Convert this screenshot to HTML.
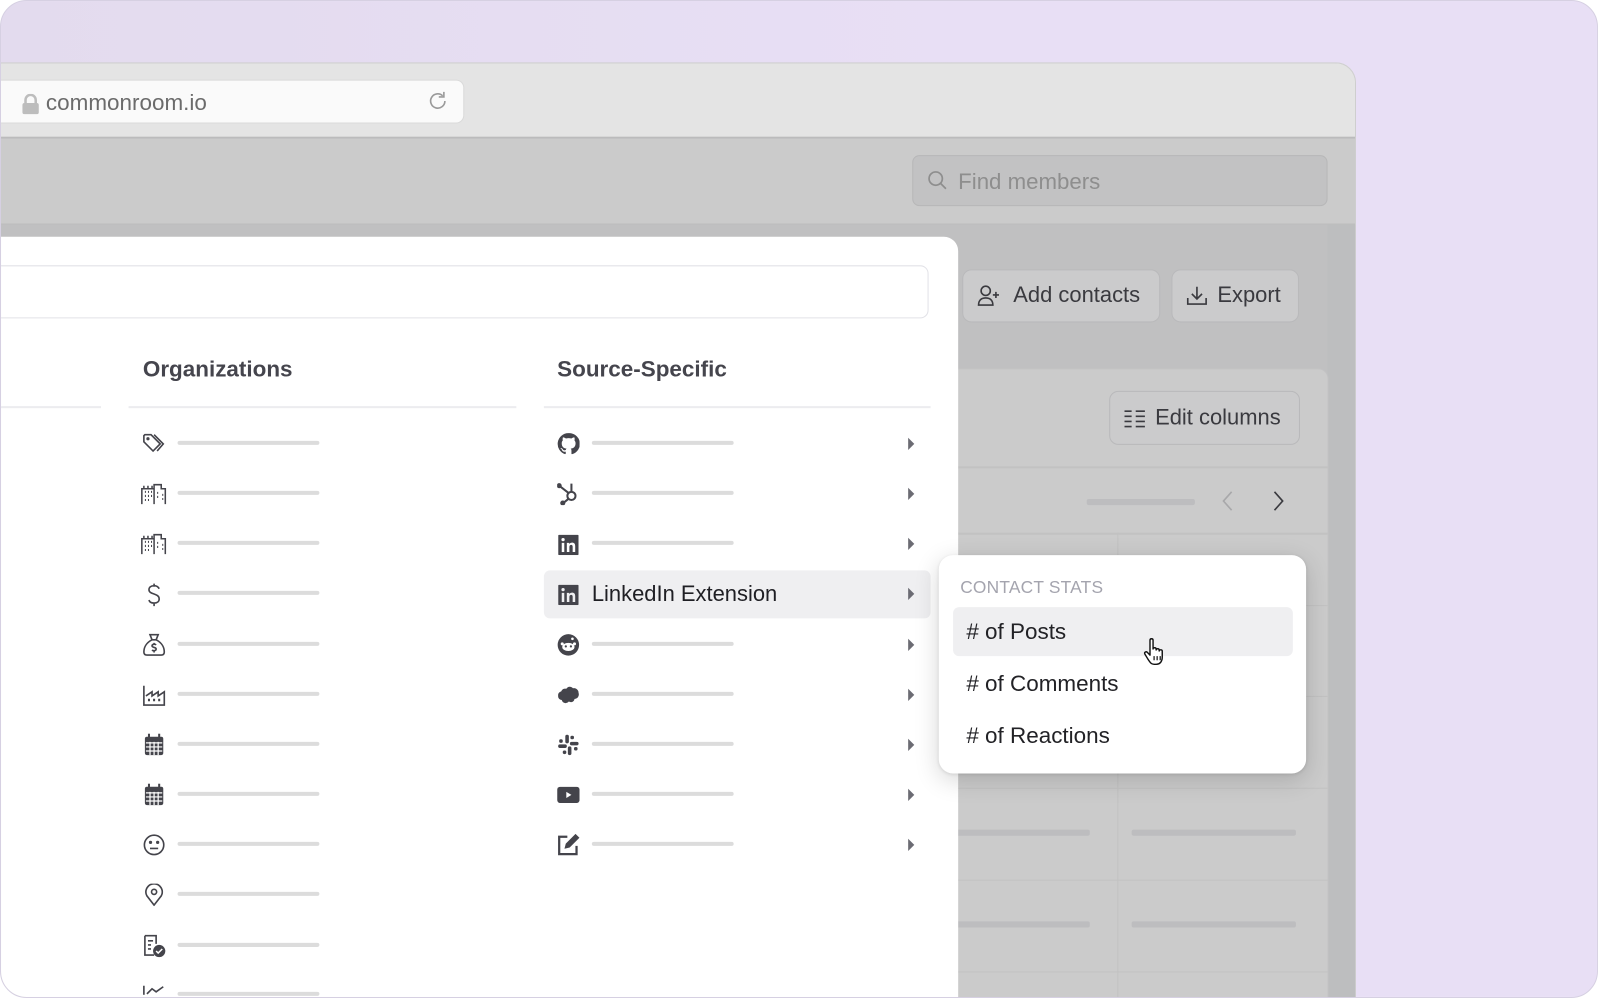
<!DOCTYPE html>
<html><head><meta charset="utf-8"><style>
html,body{margin:0;padding:0;width:1600px;height:1000px;overflow:hidden;background:#fff}
#w{position:absolute;left:0;top:0;width:1568px;height:980px;transform:scale(1.020408);transform-origin:0 0;font-family:"Liberation Sans",sans-serif;overflow:hidden}
.a{position:absolute}
.frame{left:0;top:0;width:1564px;height:976px;border:1.5px solid #d6d0e2;border-radius:26px;background:linear-gradient(90deg,#e3dbee 0%,#e8dff5 60%);overflow:hidden}
.bar{height:4px;background:#dcdcdc;border-radius:2px}
.tri{width:0;height:0;border-left:6px solid #6b6b73;border-top:6px solid transparent;border-bottom:6px solid transparent}
.btn{background:#cbcbcc;border:1.5px solid #b9b9bb;border-radius:9px;box-sizing:border-box;color:#3a3a3f;font-size:20px}
svg{position:absolute}
</style></head><body><div id="w">
<div class="a frame">
 <div class="a" style="left:-12px;top:60px;width:1338px;height:916px;border-radius:0 20px 0 0;background:#c0c0c1;overflow:hidden;border:1px solid #d0d0d0;border-bottom:none">
  <div class="a" style="left:0;top:0;width:1338px;height:72px;background:#e4e4e4;border-bottom:1.5px solid #b4b4b4"></div>
  <div class="a" style="left:0;top:16px;width:463px;height:41px;background:#fafafa;border-radius:8px;border:1px solid #dadada"></div>
  <svg style="left:31px;top:30px" width="18" height="20" viewBox="0 0 18 20"><path d="M4 9V6a5 5 0 0 1 10 0v3" fill="none" stroke="#bdbdbd" stroke-width="2.5"/><rect x="1" y="9" width="16" height="11" rx="2" fill="#bdbdbd"/></svg>
  <div class="a" style="left:55px;top:26px;font-size:22px;color:#6b6b6b">commonroom.io</div>
  <svg style="left:428px;top:26px" width="22" height="22" viewBox="0 0 22 22"><path d="M18 11a7 7 0 1 1-2.2-5.1" fill="none" stroke="#9a9a9a" stroke-width="1.6"/><path d="M17 2v5h-5" fill="none" stroke="#9a9a9a" stroke-width="1.6"/></svg>
  <div class="a" style="left:0;top:74px;width:1338px;height:83px;background:#cbcbcb;border-bottom:1.5px solid #bdbdbd"></div>
  <div class="a" style="left:904px;top:90px;width:407px;height:50px;background:#c2c2c3;border:1.5px solid #b7b7b8;border-radius:7px;box-sizing:border-box"></div>
  <svg style="left:918px;top:104px" width="22" height="22" viewBox="0 0 22 22"><circle cx="9" cy="9" r="6.5" fill="none" stroke="#8e8e8e" stroke-width="1.7"/><path d="M14 14l5 5" stroke="#8e8e8e" stroke-width="1.7"/></svg>
  <div class="a" style="left:949px;top:103px;font-size:21.8px;color:#8e8e8e">Find members</div>
  <div class="a" style="left:1311px;top:158px;width:28px;height:760px;background:#bdbebf"></div>
  <div class="a btn" style="left:953px;top:202px;width:194px;height:52px"></div>
  <svg style="left:967px;top:216px" width="26" height="24" viewBox="0 0 26 24"><circle cx="9" cy="7" r="4.5" fill="none" stroke="#3a3a3f" stroke-width="1.6"/><path d="M2 21c0-5 3-7 7-7s7 2 7 7z" fill="none" stroke="#3a3a3f" stroke-width="1.6"/><path d="M19 8v6M16 11h6" stroke="#3a3a3f" stroke-width="1.6"/></svg>
  <div class="a" style="left:1003px;top:215px;font-size:21.5px;color:#3a3a3f">Add contacts</div>
  <div class="a btn" style="left:1158px;top:202px;width:125px;height:52px"></div>
  <svg style="left:1171px;top:216px" width="24" height="24" viewBox="0 0 24 24"><path d="M12 3v11M7 10l5 5 5-5M3 14v6h18v-6" fill="none" stroke="#3a3a3f" stroke-width="1.6"/></svg>
  <div class="a" style="left:1203px;top:215px;font-size:21.5px;color:#3a3a3f">Export</div>
  <div class="a" style="left:921px;top:299px;width:389px;height:640px;background:#cbcbcb;border:1.5px solid #c2c2c3;border-radius:10px;overflow:hidden">
   <div class="a btn" style="left:175px;top:21px;width:187px;height:53px"></div>
   <svg style="left:189px;top:38px" width="22" height="20" viewBox="0 0 22 20"><path d="M1 3h7M1 8h7M1 13h7M1 18h7M12 3h9M12 8h9M12 13h9M12 18h9" stroke="#3a3a3f" stroke-width="1.6"/></svg>
   <div class="a" style="left:220px;top:35px;font-size:21.5px;color:#3a3a3f">Edit columns</div>
   <div class="a" style="left:0;top:95px;width:389px;height:1.5px;background:#c2c2c2"></div>
   <div class="a" style="left:153px;top:127px;width:106px;height:6px;background:#bdbdbf;border-radius:2px"></div>
   <svg style="left:284px;top:118px" width="14" height="22" viewBox="0 0 14 22"><path d="M11 2L3 11l8 9" fill="none" stroke="#a8a8aa" stroke-width="1.6"/></svg>
   <svg style="left:334px;top:118px" width="14" height="22" viewBox="0 0 14 22"><path d="M3 2l8 9-8 9" fill="none" stroke="#3a3a3f" stroke-width="1.6"/></svg>
   <div class="a" style="left:0;top:160px;width:389px;height:1.5px;background:#c2c2c2"></div>
   <div class="a" style="left:0;top:231px;width:389px;height:1px;background:#c2c2c2"></div>
   <div class="a" style="left:0;top:320px;width:389px;height:1px;background:#c2c2c2"></div>
   <div class="a" style="left:0;top:410px;width:389px;height:1px;background:#c2c2c2"></div>
   <div class="a" style="left:0;top:500px;width:389px;height:1px;background:#c2c2c2"></div>
   <div class="a" style="left:0;top:590px;width:389px;height:1px;background:#c2c2c2"></div>
   <div class="a" style="left:183px;top:160px;width:1px;height:480px;background:#c2c2c2"></div>
   <div class="a" style="left:20px;top:451px;width:136px;height:6px;background:#bdbdbf;border-radius:2px"></div>
   <div class="a" style="left:197px;top:451px;width:161px;height:6px;background:#bdbdbf;border-radius:2px"></div>
   <div class="a" style="left:20px;top:541px;width:136px;height:6px;background:#bdbdbf;border-radius:2px"></div>
   <div class="a" style="left:197px;top:541px;width:161px;height:6px;background:#bdbdbf;border-radius:2px"></div>
  </div>
 </div>
 <div class="a" style="left:-10px;top:231px;width:948px;height:745px;background:#fff;border-radius:0 14px 0 0"></div>
 <div class="a" style="left:-10px;top:259px;width:919px;height:52px;border:1.5px solid #e2e2e7;border-radius:8px;box-sizing:border-box"></div>
 <div class="a" style="left:139px;top:348px;font-size:22px;font-weight:bold;color:#45454d">Organizations</div>
 <div class="a" style="left:545px;top:348px;font-size:22px;font-weight:bold;color:#45454d">Source-Specific</div>
 <div class="a" style="left:0;top:397px;width:98px;height:1.5px;background:#ececef"></div>
 <div class="a" style="left:125px;top:397px;width:380px;height:1.5px;background:#ececef"></div>
 <div class="a" style="left:532px;top:397px;width:379px;height:1.5px;background:#ececef"></div>
 <div class="a bar" style="left:173px;top:431px;width:139px"></div>
 <div class="a bar" style="left:173px;top:480px;width:139px"></div>
 <div class="a bar" style="left:173px;top:529px;width:139px"></div>
 <div class="a bar" style="left:173px;top:578px;width:139px"></div>
 <div class="a bar" style="left:173px;top:628px;width:139px"></div>
 <div class="a bar" style="left:173px;top:677px;width:139px"></div>
 <div class="a bar" style="left:173px;top:726px;width:139px"></div>
 <div class="a bar" style="left:173px;top:775px;width:139px"></div>
 <div class="a bar" style="left:173px;top:824px;width:139px"></div>
 <div class="a bar" style="left:173px;top:873px;width:139px"></div>
 <div class="a bar" style="left:173px;top:923px;width:139px"></div>
 <div class="a bar" style="left:173px;top:971px;width:139px"></div>
 <svg style="left:138px;top:423px" width="24" height="22" viewBox="0 0 24 22" fill="none" stroke="#44444b" stroke-width="1.6"><path d="M2 3v6l9 9 7-7-9-9H3z"/><path d="M12 2l9 9-6 7"/><circle cx="6" cy="6" r="0.8" fill="#44444b"/></svg>
 <svg style="left:137px;top:472px" width="26" height="22" viewBox="0 0 26 22" fill="none" stroke="#44444b" stroke-width="1.5"><path d="M1 21V6h12v15M13 21V2h7v4h4v15"/><path d="M4 9h1M7 9h1M10 9h1M4 13h1M7 13h1M10 13h1M4 17h1M7 17h1M16 10h1M16 14h1M21 12h1M21 16h1" stroke-width="2"/><path d="M3 3v3M7 3v3M11 3v3"/></svg>
 <svg style="left:137px;top:521px" width="26" height="22" viewBox="0 0 26 22" fill="none" stroke="#44444b" stroke-width="1.5"><path d="M1 21V6h12v15M13 21V2h7v4h4v15"/><path d="M4 9h1M7 9h1M10 9h1M4 13h1M7 13h1M10 13h1M4 17h1M7 17h1M16 10h1M16 14h1M21 12h1M21 16h1" stroke-width="2"/><path d="M3 3v3M7 3v3M11 3v3"/></svg>
 <svg style="left:142px;top:570px" width="16" height="24" viewBox="0 0 16 24" fill="none" stroke="#44444b" stroke-width="1.6"><path d="M13 6c-1-2-3-3-5-3-3 0-5 1.5-5 4 0 5 10 3 10 9 0 2.5-2 4-5 4-2.5 0-4.5-1-5-3M8 1v3M8 20v3"/></svg>
 <svg style="left:138px;top:619px" width="24" height="24" viewBox="0 0 24 24" fill="none" stroke="#44444b" stroke-width="1.6"><path d="M8 2h8l-2 5h-4zM10 7C4 10 2 15 2 19c0 2 1 3 3 3h14c2 0 3-1 3-3 0-4-2-9-8-12"/><path d="M14 12c-1-1-4-1-4 1s4 1 4 3-3 2-4 1M12 10v1.5M12 18v1.5"/></svg>
 <svg style="left:138px;top:669px" width="24" height="22" viewBox="0 0 24 22" fill="none" stroke="#44444b" stroke-width="1.6"><path d="M2 2v19h20V8l-6 4V8l-6 4V8l-6 4"/><path d="M6 16h2M11 16h2M16 16h2" stroke-width="2.4"/></svg>
 <svg style="left:140px;top:718px" width="20" height="22" viewBox="0 0 20 22"><rect x="1" y="3" width="18" height="18" rx="2" fill="#44444b"/><path d="M5 0v5M15 0v5" stroke="#44444b" stroke-width="2"/><path d="M2 9h16M2 13h16M2 17h16M6 8v13M10 8v13M14 8v13" stroke="#fff" stroke-width="1.2"/></svg>
 <svg style="left:140px;top:767px" width="20" height="22" viewBox="0 0 20 22"><rect x="1" y="3" width="18" height="18" rx="2" fill="#44444b"/><path d="M5 0v5M15 0v5" stroke="#44444b" stroke-width="2"/><path d="M2 9h16M2 13h16M2 17h16M6 8v13M10 8v13M14 8v13" stroke="#fff" stroke-width="1.2"/></svg>
 <svg style="left:139px;top:816px" width="22" height="22" viewBox="0 0 22 22" fill="none" stroke="#44444b" stroke-width="1.6"><circle cx="11" cy="11" r="9.5"/><path d="M7 14.5h8"/><circle cx="7.5" cy="8.5" r="0.8" fill="#44444b"/><circle cx="14.5" cy="8.5" r="0.8" fill="#44444b"/></svg>
 <svg style="left:141px;top:865px" width="18" height="22" viewBox="0 0 18 22" fill="none" stroke="#44444b" stroke-width="1.6"><path d="M9 21l-7-9a8 8 0 1 1 14 0z"/><circle cx="9" cy="8" r="2.5"/></svg>
 <svg style="left:138px;top:914px" width="24" height="24" viewBox="0 0 24 24"><path d="M3 2h11v8M3 2v19h9" fill="none" stroke="#44444b" stroke-width="1.6"/><path d="M6 7h5M6 11h3M6 15h3" stroke="#44444b" stroke-width="1.6"/><circle cx="17" cy="17" r="6" fill="#44444b"/><path d="M14 17l2 2 4-4" fill="none" stroke="#fff" stroke-width="1.5"/></svg>
 <svg style="left:139px;top:964px" width="22" height="10" viewBox="0 0 22 10" fill="none" stroke="#44444b" stroke-width="1.6"><path d="M1 1v9M4 9l5-5 4 3 7-5"/></svg>
 <div class="a" style="left:532px;top:558px;width:379px;height:47px;background:#efeff1;border-radius:6px"></div>
 <div class="a" style="left:579px;top:569px;font-size:21.5px;color:#1f1f24">LinkedIn Extension</div>
 <div class="a bar" style="left:579px;top:431px;width:139px"></div>
 <div class="a bar" style="left:579px;top:480px;width:139px"></div>
 <div class="a bar" style="left:579px;top:529px;width:139px"></div>
 <div class="a bar" style="left:579px;top:628px;width:139px"></div>
 <div class="a bar" style="left:579px;top:677px;width:139px"></div>
 <div class="a bar" style="left:579px;top:726px;width:139px"></div>
 <div class="a bar" style="left:579px;top:775px;width:139px"></div>
 <div class="a bar" style="left:579px;top:824px;width:139px"></div>
 <div class="a tri" style="left:889px;top:428px"></div>
 <div class="a tri" style="left:889px;top:477px"></div>
 <div class="a tri" style="left:889px;top:526px"></div>
 <div class="a tri" style="left:889px;top:575px"></div>
 <div class="a tri" style="left:889px;top:625px"></div>
 <div class="a tri" style="left:889px;top:674px"></div>
 <div class="a tri" style="left:889px;top:723px"></div>
 <div class="a tri" style="left:889px;top:772px"></div>
 <div class="a tri" style="left:889px;top:821px"></div>
 <svg style="left:545px;top:423px" width="22" height="22" viewBox="0 0 24 24"><path fill="#44444b" d="M12 .5a11.5 11.5 0 0 0-3.6 22.4c.6.1.8-.3.8-.6v-2c-3.2.7-3.9-1.5-3.9-1.5-.5-1.3-1.3-1.7-1.3-1.7-1-.7.1-.7.1-.7 1.2.1 1.8 1.2 1.8 1.2 1 1.8 2.8 1.3 3.4 1 .1-.8.4-1.3.8-1.6-2.6-.3-5.2-1.3-5.2-5.7 0-1.3.4-2.3 1.2-3.1-.1-.3-.5-1.5.1-3.1 0 0 1-.3 3.2 1.2a11 11 0 0 1 5.8 0c2.2-1.5 3.2-1.2 3.2-1.2.6 1.6.2 2.8.1 3.1.7.8 1.2 1.8 1.2 3.1 0 4.4-2.7 5.4-5.2 5.7.4.4.8 1.1.8 2.2v3.2c0 .3.2.7.8.6A11.5 11.5 0 0 0 12 .5z"/></svg>
 <svg style="left:545px;top:472px" width="22" height="22" viewBox="0 0 22 22" fill="none" stroke="#44444b" stroke-width="2"><circle cx="14" cy="13" r="4"/><path d="M2 3l9 7M14 1v8M11 16l-5 4"/><circle cx="2" cy="3" r="1.5" fill="#44444b"/><circle cx="5.5" cy="20" r="1.5" fill="#44444b"/></svg>
 <svg style="left:546px;top:523px" width="20" height="20" viewBox="0 0 20 20"><rect width="20" height="20" rx="1" fill="#44444b"/><rect x="3.5" y="8" width="2.5" height="9" fill="#fff"/><circle cx="4.8" cy="4.8" r="1.6" fill="#fff"/><path d="M8.5 8h2.4v1.3c.5-1 1.6-1.5 2.8-1.5 2 0 3 1.2 3 3.5V17h-2.5v-5.2c0-1.2-.5-1.8-1.4-1.8-1 0-1.8.7-1.8 2V17H8.5z" fill="#fff"/></svg>
 <svg style="left:546px;top:572px" width="20" height="20" viewBox="0 0 20 20"><rect width="20" height="20" rx="1" fill="#44444b"/><rect x="3.5" y="8" width="2.5" height="9" fill="#efeff1"/><circle cx="4.8" cy="4.8" r="1.6" fill="#efeff1"/><path d="M8.5 8h2.4v1.3c.5-1 1.6-1.5 2.8-1.5 2 0 3 1.2 3 3.5V17h-2.5v-5.2c0-1.2-.5-1.8-1.4-1.8-1 0-1.8.7-1.8 2V17H8.5z" fill="#efeff1"/></svg>
 <svg style="left:545px;top:620px" width="22" height="22" viewBox="0 0 22 22"><circle cx="11" cy="11" r="10.5" fill="#44444b"/><ellipse cx="11" cy="13" rx="6" ry="4" fill="#fff"/><circle cx="8.5" cy="12.5" r="1.1" fill="#44444b"/><circle cx="13.5" cy="12.5" r="1.1" fill="#44444b"/><circle cx="15" cy="5" r="1.3" fill="#fff"/><circle cx="5" cy="10" r="1.5" fill="#fff"/><circle cx="17" cy="10" r="1.5" fill="#fff"/></svg>
 <svg style="left:545px;top:671px" width="22" height="18" viewBox="0 0 22 18"><path fill="#44444b" d="M9 3a4 4 0 0 1 6.5-.5A4.5 4.5 0 0 1 21 7a4.5 4.5 0 0 1-4 6 3.5 3.5 0 0 1-5.5 2.5A4 4 0 0 1 4.5 14 3.5 3.5 0 0 1 1 10a3.8 3.8 0 0 1 3-4.5A4 4 0 0 1 9 3z"/></svg>
 <svg style="left:545px;top:718px" width="22" height="22" viewBox="0 0 22 22" fill="#44444b"><rect x="8" y="1" width="3.5" height="8.5" rx="1.7"/><rect x="12.5" y="8" width="8.5" height="3.5" rx="1.7"/><rect x="10.5" y="12.5" width="3.5" height="8.5" rx="1.7"/><rect x="1" y="10.5" width="8.5" height="3.5" rx="1.7"/><rect x="13" y="2" width="3.5" height="3.5" rx="1.5"/><rect x="16.5" y="13" width="3.5" height="3.5" rx="1.5"/><rect x="5.5" y="16.5" width="3.5" height="3.5" rx="1.5"/><rect x="2" y="5.5" width="3.5" height="3.5" rx="1.5"/></svg>
 <svg style="left:545px;top:770px" width="22" height="16" viewBox="0 0 22 16"><rect width="22" height="16" rx="3" fill="#44444b"/><path d="M9 5l5 3-5 3z" fill="#fff"/></svg>
 <svg style="left:545px;top:816px" width="22" height="22" viewBox="0 0 22 22" fill="none" stroke="#44444b" stroke-width="2.2"><path d="M10 3H2v17h17v-8"/><path d="M8 14l1-4 9-9 3 3-9 9z" fill="#44444b" stroke-width="1.2"/></svg>
 <div class="a" style="left:919px;top:543px;width:360px;height:214px;background:#fff;border-radius:14px;box-shadow:0 6px 24px rgba(0,0,0,.16),0 1px 3px rgba(0,0,0,.1)"></div>
 <div class="a" style="left:940px;top:565px;font-size:17px;color:#a4a4ae;letter-spacing:.2px">CONTACT STATS</div>
 <div class="a" style="left:933px;top:594px;width:333px;height:48px;background:#efeff1;border-radius:6px"></div>
 <div class="a" style="left:946px;top:605px;font-size:22px;color:#222226">#&nbsp;of Posts</div>
 <div class="a" style="left:946px;top:656px;font-size:22px;color:#222226">#&nbsp;of Comments</div>
 <div class="a" style="left:946px;top:707px;font-size:22px;color:#222226">#&nbsp;of Reactions</div>
 <svg style="left:1119px;top:623px" width="28" height="30" viewBox="0 0 28 30"><path d="M7 3.5c0-2 3-2 3 0V12c0-1.6 3-1.6 3 0v1c0-1.6 3-1.6 3 0v1c0-1.6 3-1.6 3 0v6c0 4-2 7-6 7h-2c-3 0-4-2-6-5l-3-5c-1-2 1.5-3 2.5-1.5L7 18z" fill="#fff" stroke="#111" stroke-width="1.4" stroke-linejoin="round"/><path d="M11 19v4M14 19v4M17 19v4" stroke="#111" stroke-width="1.2"/></svg>
</div>
</div></body></html>
